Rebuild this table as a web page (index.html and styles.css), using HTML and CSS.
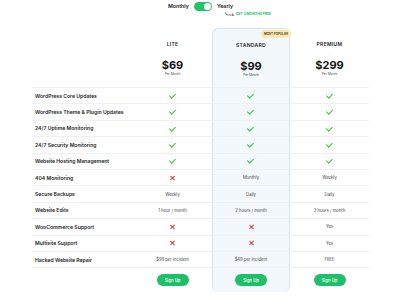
FILE: index.html
```html
<!DOCTYPE html>
<html lang="en">
<head>
  <meta charset="UTF-8" />
  <title>Pricing</title>
  <link rel="stylesheet" href="styles.css">
</head>
<body>
  <div class="billing">
    <span class="billing-label">Monthly</span>
    <span class="toggle"><span class="knob"></span></span>
    <span class="billing-label">Yearly</span>
  </div>
  <div class="promo">
    <svg class="promo-arrow" width="9" height="4" viewBox="0 0 9 4"><path d="M0.5 0.5 Q0.5 3 3 3 H8.5" fill="none" stroke="#333" stroke-width="0.6"/><path d="M7 1.8 L8.6 3 L7 4" fill="none" stroke="#333" stroke-width="0.6"/></svg>
    <span>GET 2 MONTHS FREE</span>
  </div>

  <div class="pricing">
    <!-- Plan headers -->
    <div class="cell head"></div>
    <div class="cell head plan">
      <div class="plan-name">LITE</div>
      <div class="price">$69</div>
      <div class="per">Per Month</div>
    </div>
    <div class="cell head plan std std-top">
      <span class="badge">MOST POPULAR</span>
      <div class="plan-name">STANDARD</div>
      <div class="price">$99</div>
      <div class="per">Per Month</div>
    </div>
    <div class="cell head plan">
      <div class="plan-name">PREMIUM</div>
      <div class="price">$299</div>
      <div class="per">Per Month</div>
    </div>

    <div class="cell label">WordPress Core Updates</div>
    <div class="cell"><span class="yes"></span></div>
    <div class="cell std"><span class="yes"></span></div>
    <div class="cell"><span class="yes"></span></div>

    <div class="cell label">WordPress Theme &amp; Plugin Updates</div>
    <div class="cell"><span class="yes"></span></div>
    <div class="cell std"><span class="yes"></span></div>
    <div class="cell"><span class="yes"></span></div>

    <div class="cell label">24/7 Uptime Monitoring</div>
    <div class="cell"><span class="yes"></span></div>
    <div class="cell std"><span class="yes"></span></div>
    <div class="cell"><span class="yes"></span></div>

    <div class="cell label">24/7 Security Monitoring</div>
    <div class="cell"><span class="yes"></span></div>
    <div class="cell std"><span class="yes"></span></div>
    <div class="cell"><span class="yes"></span></div>

    <div class="cell label">Website Hosting Management</div>
    <div class="cell"><span class="yes"></span></div>
    <div class="cell std"><span class="yes"></span></div>
    <div class="cell"><span class="yes"></span></div>

    <div class="cell label">404 Monitoring</div>
    <div class="cell"><span class="no"></span></div>
    <div class="cell std">Monthly</div>
    <div class="cell">Weekly</div>

    <div class="cell label">Secure Backups</div>
    <div class="cell">Weekly</div>
    <div class="cell std">Daily</div>
    <div class="cell">Daily</div>

    <div class="cell label">Website Edits</div>
    <div class="cell">1 hour / month</div>
    <div class="cell std">2 hours / month</div>
    <div class="cell">3 hours / month</div>

    <div class="cell label">WooCommerce Support</div>
    <div class="cell"><span class="no"></span></div>
    <div class="cell std"><span class="no"></span></div>
    <div class="cell">Yes</div>

    <div class="cell label">Multisite Support</div>
    <div class="cell"><span class="no"></span></div>
    <div class="cell std"><span class="no"></span></div>
    <div class="cell">Yes</div>

    <div class="cell label">Hacked Website Repair</div>
    <div class="cell">$99 per incident</div>
    <div class="cell std">$49 per incident</div>
    <div class="cell">FREE</div>

    <div class="cell foot"></div>
    <div class="cell foot"><button>Sign Up</button></div>
    <div class="cell foot std std-bottom"><button>Sign Up</button></div>
    <div class="cell foot"><button>Sign Up</button></div>
  </div>
</body>
</html>
```

FILE: styles.css
```css
body {
  margin: 0;
  font-family: "Inter", "Noto Sans", sans-serif;
  color: #222;
  background: #fff;
}
/* Billing switch */
.billing {
  display: flex;
  align-items: center;
  justify-content: center;
  gap: 5px;
  padding-top: 1px;
  margin-left: 1px;
  height: 10px;
}
.billing-label {
  font-size: 5.3px;
  font-weight: 600;
  color: #222;
}
.toggle {
  width: 18px;
  height: 9px;
  border-radius: 5px;
  background: #22c36b;
  display: flex;
  align-items: center;
  justify-content: flex-end;
  padding: 0 1px;
  box-sizing: border-box;
}
.knob {
  width: 7px;
  height: 7px;
  border-radius: 50%;
  background: #fff;
}
.promo {
  display: flex;
  align-items: center;
  gap: 2px;
  margin-left: 225px;
  height: 6px;
  font-size: 3.4px;
  font-weight: 700;
  color: #22c36b;
}
.promo-arrow {
  display: block;
}

/* Comparison table */
.pricing {
  display: grid;
  grid-template-columns: 101px 79px 78px 79px;
  grid-template-rows: 60px repeat(11, 16.4px) 24px;
  margin-left: 32px;
  margin-top: 11px;
  width: 337px;
}
.cell {
  display: flex;
  align-items: center;
  justify-content: center;
  border-bottom: 1px solid #f0f0f0;
  font-size: 4.2px;
  color: #444;
  box-sizing: border-box;
}
.std {
  background: #f3f8fd;
  border-left: 1px solid #d9e3ee;
  border-right: 1px solid #d9e3ee;
}
.std-top {
  border-top: 1px solid #d9e3ee;
  border-radius: 6px 6px 0 0;
}
.std-bottom {
  border-bottom: 1px solid #d9e3ee;
  border-radius: 0 0 6px 6px;
}
.label {
  justify-content: flex-start;
  padding-left: 3px;
  font-size: 5.1px;
  font-weight: 600;
  color: #1c1c1c;
}
.head {
  flex-direction: column;
  position: relative;
}
.plan {
  justify-content: flex-start;
  padding-top: 13px;
}
.plan-name {
  font-size: 5px;
  font-weight: 600;
  letter-spacing: 0.3px;
  color: #222;
}
.price {
  margin-top: 12px;
  font-size: 11px;
  font-weight: 700;
  color: #111;
  line-height: 12px;
}
.per {
  font-size: 3.2px;
  color: #444;
  margin-top: 1px;
}
.badge {
  position: absolute;
  top: 1px;
  right: -2px;
  background: #fde8b4;
  color: #5a4a1f;
  font-size: 3px;
  font-weight: 700;
  padding: 2px 3px;
  border-radius: 4px;
}
.yes {
  width: 5px;
  height: 2.6px;
  border-left: 1.3px solid #3cc43a;
  border-bottom: 1.3px solid #3cc43a;
  transform: rotate(-45deg) translate(0, -1px);
}
.no {
  position: relative;
  width: 5px;
  height: 5px;
}
.no::before, .no::after {
  content: "";
  position: absolute;
  left: 2px;
  top: -0.5px;
  width: 1.3px;
  height: 6px;
  background: #ea2a2a;
  transform: rotate(45deg);
}
.no::after {
  transform: rotate(-45deg);
}
.foot {
  border-bottom: none;
}
button {
  font-family: inherit;
  width: 32px;
  height: 12px;
  border: none;
  border-radius: 6px;
  background: #1fbf69;
  color: #fff;
  font-size: 4.2px;
  font-weight: 500;
  padding: 0;
  cursor: pointer;
}
```
